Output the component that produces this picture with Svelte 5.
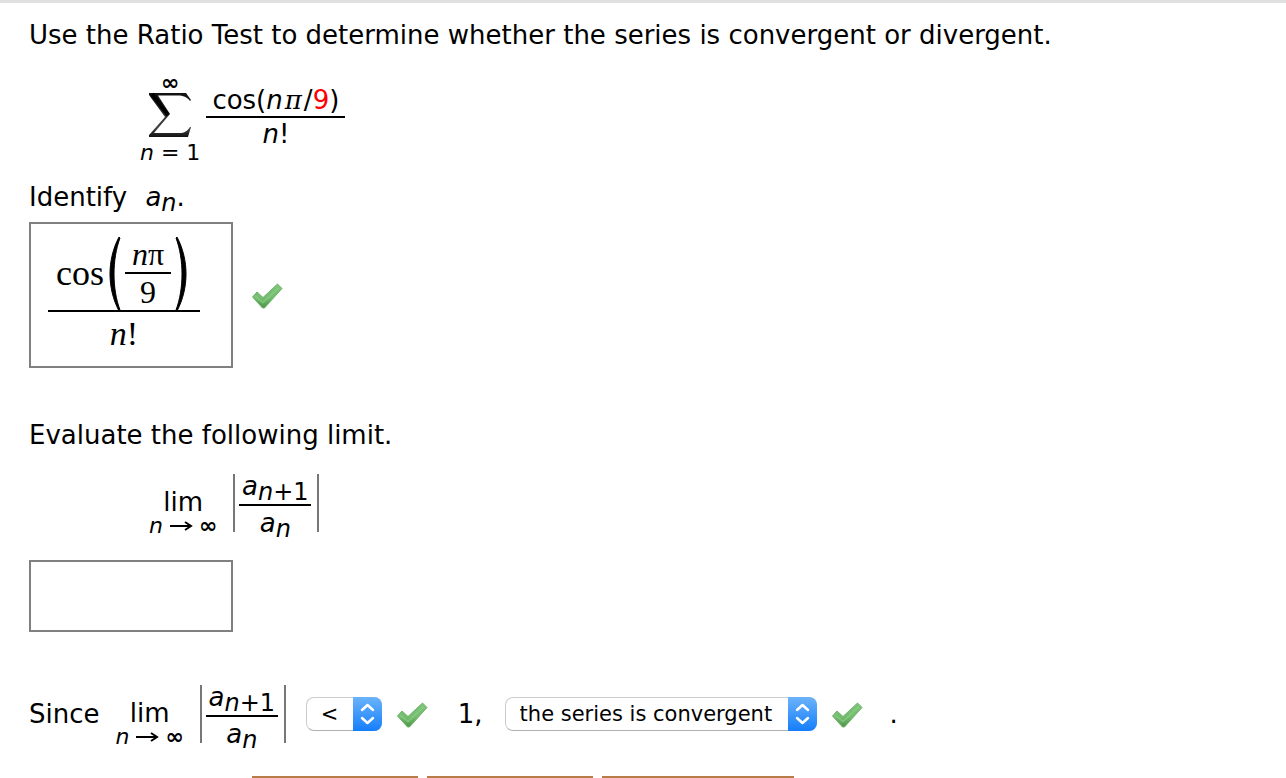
<script lang="ts">
    let limit = $state('');
    let comparison = $state('<');
    let conclusion = $state('the series is convergent');
</script>

{#snippet check()}
    <svg class="check" width="32" height="28" viewBox="0 0 32 28" aria-hidden="true">
        <defs>
            <linearGradient id="check-fill" x1="0" y1="0" x2="0" y2="1">
                <stop offset="0" stop-color="#7cc478" />
                <stop offset="0.6" stop-color="#74bb6e" />
                <stop offset="1" stop-color="#4b9448" />
            </linearGradient>
        </defs>
        <path
            d="M1.5 16L6 11L12 16.5L26.500 3L31 7.5L13.500 27L11.500 27Z"
            fill="url(#check-fill)"
            stroke="#6fb36a"
            stroke-width="1"
            stroke-linejoin="round"
        />
        <path d="M4 15L12 21.500L28 6.500" fill="none" stroke="#8bcf86" stroke-width="2" opacity="0.6" />
    </svg>
{/snippet}

{#snippet term(sub: string)}
    <span class="term"><i>a</i><span class="sub"><i>n</i>{sub}</span></span>
{/snippet}

{#snippet limitRatio()}
    <div class="limit">
        <div class="lim">
            <span>lim</span>
            <span class="under">
                <i>n</i>
                <svg width="24" height="12" viewBox="0 0 24 12" aria-hidden="true">
                    <path d="M1 6H22M16 2L22 6L16 10" fill="none" stroke="#000" stroke-width="2" />
                </svg>
                <span class="infinity">∞</span>
            </span>
        </div>
        <div class="absolute-value">
            <div class="ratio">
                {@render term('+1')}
                {@render term('')}
            </div>
        </div>
    </div>
{/snippet}

{#snippet paren(flip: boolean)}
    <svg class:flip width="13" height="76" viewBox="0 0 13 76" aria-hidden="true">
        <path d="M11 1C-1 24 -1 52 11 75L12 74C4 53 4 23 12 2Z" fill="#000" stroke="#000" />
    </svg>
{/snippet}

<main>
    <p>Use the Ratio Test to determine whether the series is convergent or divergent.</p>

    <div class="series">
        <div class="sum">
            <span class="infinity">∞</span>
            <svg width="44" height="46" viewBox="0 0 44 46" aria-hidden="true">
                <defs>
                    <linearGradient id="sigma-fill" x1="0" y1="0" x2="0" y2="1">
                        <stop offset="0" stop-color="#111" />
                        <stop offset="0.8" stop-color="#444" />
                        <stop offset="1" stop-color="#111" />
                    </linearGradient>
                </defs>
                <path
                    d="M1 2H38L43 9L42 10C39 6 35 4.500 30 4.500H10L22 23L6 42H31C37 42 39 40 42 36H43L40 46H1V44L17 26L1 4Z"
                    fill="url(#sigma-fill)"
                />
                <path d="M4 3L20 24" stroke="#000" stroke-width="4" />
            </svg>
            <span class="index"><i>n</i> = 1</span>
        </div>
        <div class="fraction">
            <span>cos(<i>n</i><span class="pi">π</span>/<span class="given">9</span>)</span>
            <span><i>n</i>!</span>
        </div>
    </div>

    <p class="identify">Identify {@render term('')}.</p>

    <div class="answer-row">
        <div class="box answer">
            <div class="numerator">
                <span>cos</span>
                {@render paren(false)}
                <div class="inner">
                    <span><i>n</i>π</span>
                    <span>9</span>
                </div>
                {@render paren(true)}
            </div>
            <div class="denominator"><i>n</i>!</div>
        </div>
        {@render check()}
    </div>

    <label class="evaluate" for="limit">Evaluate the following limit.</label>
    <div class="indented">{@render limitRatio()}</div>
    <input id="limit" class="box" type="text" bind:value={limit} />

    <div class="conclusion">
        <span id="since">Since</span>
        {@render limitRatio()}
        <div class="select compare">
            <select aria-labelledby="since" bind:value={comparison}>
                <option>&lt;</option>
                <option>&gt;</option>
                <option>=</option>
            </select>
            <svg viewBox="0 0 29 34" aria-hidden="true">
                <path d="M9 13L14.500 8L20 13M9 21L14.500 26L20 21" />
            </svg>
        </div>
        {@render check()}
        <span id="one" class="one">1,</span>
        <div class="select result">
            <select aria-labelledby="one" bind:value={conclusion}>
                <option>the series is convergent</option>
                <option>the series is divergent</option>
                <option>the test is inconclusive</option>
            </select>
            <svg viewBox="0 0 29 34" aria-hidden="true">
                <path d="M9 13L14.500 8L20 13M9 21L14.500 26L20 21" />
            </svg>
        </div>
        {@render check()}
        <span class="stop">.</span>
    </div>

    <div class="tabs">
        <span></span>
        <span></span>
        <span class="wide"></span>
    </div>
</main>

<style>
    :global(body) {
        margin: 0;
        background: #fff;
    }

    main {
        box-sizing: border-box;
        padding: 16px 29px 0;
        border-top: 3px solid #e0e0e0;
        color: #000;
        font: 26px/32px 'DejaVu Sans', Verdana, sans-serif;
    }

    p {
        margin: 0;
    }

    svg {
        display: block;
        flex: none;
    }

    .series {
        display: flex;
        align-items: flex-start;
        gap: 6px;
        margin: 24px 0 0 111px;
    }

    .sum {
        display: flex;
        flex-direction: column;
        align-items: center;
        font-size: 22px;
    }

    .infinity {
        font-size: 22px;
        font-weight: bold;
        line-height: 16px;
    }

    .index {
        line-height: 32px;
    }

    .fraction {
        display: flex;
        flex-direction: column;
        margin-top: 9px;
        text-align: center;
    }

    .fraction > span:first-child {
        padding: 0 6px;
        border-bottom: 2px solid #000;
    }

    .pi {
        padding: 0 2px;
        font-family: 'DejaVu Serif', serif;
        font-style: italic;
    }

    .given {
        color: #f00;
    }

    .term {
        white-space: nowrap;
    }

    .sub {
        position: relative;
        top: 5px;
        font-size: 24px;
        line-height: 24px;
    }

    .identify {
        margin-top: 12px;
    }

    .identify .term {
        margin-left: 10px;
    }

    .box {
        box-sizing: border-box;
        width: 204px;
        border: 2px solid #808080;
        background: #fff;
    }

    .answer-row {
        display: flex;
        align-items: center;
        gap: 18px;
        margin-top: 9px;
    }

    .answer {
        height: 146px;
        padding: 12px 31px 0 17px;
        font: 34px/36px 'Liberation Serif', serif;
    }

    .numerator {
        display: flex;
        align-items: center;
        justify-content: center;
        height: 74px;
        border-bottom: 2px solid #000;
        font-size: 36px;
    }

    .numerator svg {
        margin: 2px 4px 0;
    }

    .flip {
        transform: scaleX(-1);
    }

    .inner {
        display: flex;
        flex-direction: column;
        width: 46px;
        text-align: center;
        font-size: 32px;
    }

    .inner span:first-child {
        border-bottom: 2px solid #000;
    }

    .denominator {
        padding-top: 4px;
        text-align: center;
    }

    .evaluate {
        display: block;
        margin-top: 51px;
    }

    .indented {
        margin: 23px 0 0 120px;
    }

    .limit {
        display: flex;
        align-items: flex-start;
        gap: 16px;
    }

    .lim {
        display: flex;
        flex-direction: column;
        align-items: center;
        padding-top: 14px;
        line-height: 28px;
    }

    .under {
        display: flex;
        align-items: center;
        gap: 6px;
        font-size: 22px;
        line-height: 20px;
    }

    .absolute-value {
        height: 58px;
        padding: 0 6px 0 4px;
        border: solid #777;
        border-width: 0 2px;
    }

    .ratio {
        display: flex;
        flex-direction: column;
        width: 72px;
        text-align: center;
        line-height: 24px;
    }

    .ratio .term:first-child {
        padding-bottom: 5px;
        border-bottom: 2px solid #000;
    }

    .ratio .term + .term {
        padding-top: 5px;
    }

    input.box {
        display: block;
        height: 72px;
        margin-top: 24px;
        padding: 0 16px;
        font: 34px 'Liberation Serif', serif;
    }

    .conclusion {
        display: flex;
        align-items: center;
        height: 60px;
        margin-top: 52px;
    }

    .conclusion > .limit {
        margin: 4px 20px 0 16px;
    }

    .select {
        position: relative;
        margin-right: 14px;
    }

    .select select {
        box-sizing: border-box;
        display: block;
        width: 100%;
        height: 34px;
        margin: 0;
        padding: 0 30px 0 14px;
        appearance: none;
        border: 1px solid #ccc;
        border-bottom-color: #b0b0b0;
        border-radius: 8px;
        background: #fff;
        color: #000;
        font: 21px 'DejaVu Sans', Verdana, sans-serif;
    }

    .select svg {
        position: absolute;
        top: 0;
        right: 0;
        width: 29px;
        height: 34px;
        border-radius: 0 8px 8px 0;
        background: linear-gradient(#6bb3fa, #157efb);
        pointer-events: none;
    }

    .select path {
        fill: none;
        stroke: #fff;
        stroke-width: 2.5;
        stroke-linecap: round;
        stroke-linejoin: round;
    }

    .compare {
        width: 76px;
    }

    .result {
        width: 312px;
    }

    .one {
        margin: 0 22px 0 30px;
    }

    .stop {
        margin-left: 27px;
    }

    .tabs {
        display: flex;
        gap: 9px;
        margin: 32px 0 0 223px;
    }

    .tabs span {
        width: 166px;
        border-top: 2px solid #b87c49;
    }

    .tabs .wide {
        width: 192px;
    }
</style>
